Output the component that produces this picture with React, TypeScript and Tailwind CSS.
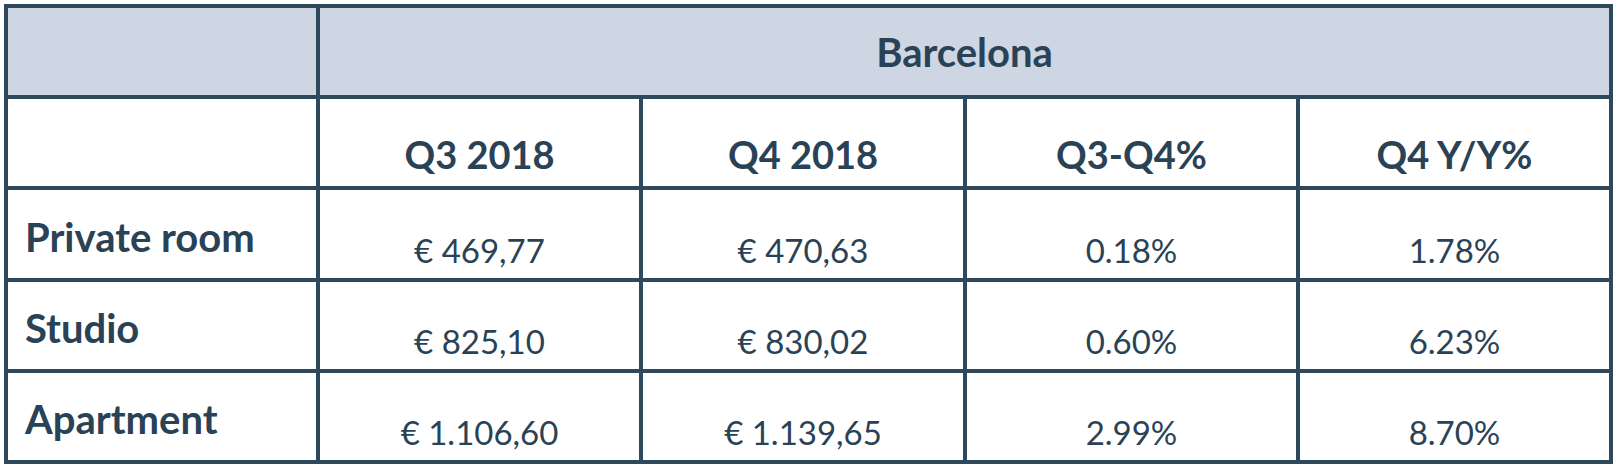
import React from 'react';

const rows = [
  { label: 'Private room', q3: '€ 469,77', q4: '€ 470,63', qq: '0.18%', yy: '1.78%' },
  { label: 'Studio', q3: '€ 825,10', q4: '€ 830,02', qq: '0.60%', yy: '6.23%' },
  { label: 'Apartment', q3: '€ 1.106,60', q4: '€ 1.139,65', qq: '2.99%', yy: '8.70%' },
];

const headers = ['Q3 2018', 'Q4 2018', 'Q3-Q4%', 'Q4 Y/Y%'];

export default function App() {
  return (
    <div className="min-h-screen bg-white p-[4px] font-['Lato',sans-serif] text-[#2a4256]">
      <div className="grid w-fit grid-cols-[308px_319px_320px_329px_309px] grid-rows-[87px_87px_88px_87px_87px] gap-[4px] bg-[#2e495c] p-[4px]">
        {/* City header */}
        <div className="bg-[#ced5e3]" />
        <div className="col-span-4 flex items-center justify-center bg-[#ced5e3] text-[40px] font-bold leading-none">
          Barcelona
        </div>

        {/* Quarter headers */}
        <div className="bg-white" />
        {headers.map((h) => (
          <div key={h} className="flex items-end justify-center bg-white pb-[13px] text-[38px] font-bold leading-none">
            {h}
          </div>
        ))}

        {/* Data rows */}
        {rows.map((r) => (
          <React.Fragment key={r.label}>
            <div className="flex items-end bg-white pb-[21px] pl-[17px] text-[40px] font-bold leading-none">
              {r.label}
            </div>
            {[r.q3, r.q4, r.qq, r.yy].map((v, i) => (
              <div key={i} className="flex items-end justify-center bg-white pb-[11px] text-[33px] leading-none">
                {v}
              </div>
            ))}
          </React.Fragment>
        ))}
      </div>
    </div>
  );
}
